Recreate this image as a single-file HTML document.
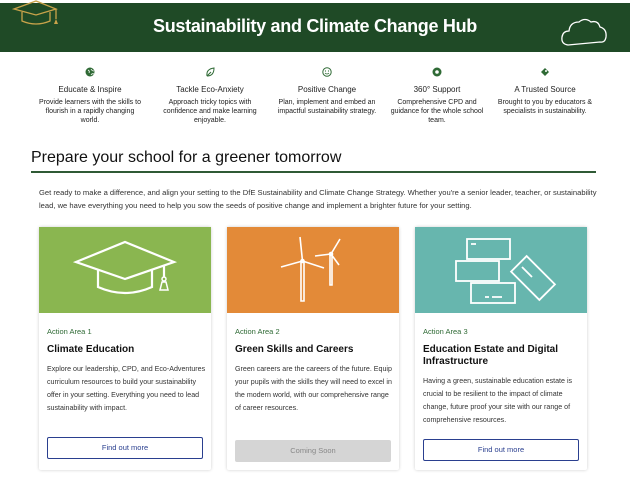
<!DOCTYPE html>
<html><head><style>
*{margin:0;padding:0;box-sizing:border-box}
body{width:630px;height:477px;background:#fff;font-family:"Liberation Sans",sans-serif;position:relative;overflow:hidden;color:#222}
.hdr{position:absolute;top:3px;left:0;width:630px;height:49px;background:#1f4a26}
.hdr h1{position:absolute;left:0;width:630px;top:13px;text-align:center;color:#fff;font-size:18px;font-weight:bold;letter-spacing:-0.3px}
.feat{position:absolute;top:67px;width:104px;text-align:center;font-size:7px;line-height:9px;color:#222}
.feat .t{font-size:8px;margin:8px 0 4px}
.feat svg{display:block;margin:0 auto}
.sec{position:absolute;left:31px;top:149px;font-size:16px;color:#111}
.line{position:absolute;left:31px;top:171px;width:565px;height:1.5px;background:#2f5a35}
.p{position:absolute;left:39px;top:186px;width:560px;font-size:7.6px;line-height:13px;color:#333}
.card{position:absolute;top:227px;width:172px;height:243px;background:#fff;box-shadow:0 0 3px rgba(0,0,0,.2);border-radius:2px}
.img{height:86px;position:relative}
.lab{position:absolute;left:8px;top:100px;font-size:7.5px;color:#2f6a35}
.ti{position:absolute;left:8px;top:117px;font-size:10px;font-weight:bold;color:#111;width:160px;line-height:12px}
.bd{position:absolute;left:8px;width:160px;font-size:7.1px;line-height:13px;color:#333}
.btn{position:absolute;left:8px;width:156px;height:22px;border:1px solid #2a3f8f;border-radius:2px;text-align:center;font-size:7.5px;line-height:20px;color:#2a3f8f}
</style></head><body>
<div class="hdr"><h1>Sustainability and Climate Change Hub</h1>
<svg style="position:absolute;left:12px;top:-4px" width="52" height="26" viewBox="0 0 52 26"><path d="M2 10 L24 2 L44 10 L24 16 Z M10 13 L10 22 Q24 28 38 22 L38 13 M44 10 L44 20" fill="none" stroke="#c9a34a" stroke-width="1.3"/><path d="M44 20 l-2 5 h4z" fill="#c9a34a"/></svg>
<svg style="position:absolute;left:560px;top:12px" width="50" height="34" viewBox="0 0 50 34"><path d="M8 30 Q1 29 2 22 Q3 16 9 16 Q10 7 19 7 Q25 2 31 7 Q38 5 40 12 Q47 14 46 22 Q45 28 40 27 Z" fill="none" stroke="#fff" stroke-width="1.3"/></svg>
</div>
<div class="feat" style="left:38px"><svg width="10" height="10"><circle cx="5" cy="5" r="4.5" fill="#2f6a35"/><path d="M3 3q2 1 1 3M6 2q1 2 3 2M6 8q1-2 3-1" stroke="#fff" fill="none" stroke-width=".8"/></svg><div class="t">Educate &amp; Inspire</div>Provide learners with the skills to flourish in a rapidly changing world.</div>
<div class="feat" style="left:158px"><svg width="10" height="10"><path d="M2 9Q1 2 9 1Q9 9 2 9M2 9L6 5" stroke="#2f6a35" fill="none" stroke-width="1"/></svg><div class="t">Tackle Eco-Anxiety</div>Approach tricky topics with confidence and make learning enjoyable.</div>
<div class="feat" style="left:275px"><svg width="10" height="10"><circle cx="5" cy="5" r="4.2" stroke="#2f6a35" fill="none" stroke-width="1"/><circle cx="3.5" cy="4" r=".6" fill="#2f6a35"/><circle cx="6.5" cy="4" r=".6" fill="#2f6a35"/><path d="M3 6q2 2 4 0" stroke="#2f6a35" fill="none" stroke-width=".8"/></svg><div class="t">Positive Change</div>Plan, implement and embed an impactful sustainability strategy.</div>
<div class="feat" style="left:385px"><svg width="10" height="10"><circle cx="5" cy="5" r="4.5" fill="#2f6a35"/><circle cx="5" cy="5" r="1.8" fill="#fff"/></svg><div class="t">360° Support</div>Comprehensive CPD and guidance for the whole school team.</div>
<div class="feat" style="left:493px"><svg width="10" height="10"><path d="M1 5L5 1L9 5L5 9Z" fill="#2f6a35"/><circle cx="6" cy="4" r="1" fill="#fff"/></svg><div class="t">A Trusted Source</div>Brought to you by educators &amp; specialists in sustainability.</div>
<div class="sec">Prepare your school for a greener tomorrow</div>
<div class="line"></div>
<div class="p">Get ready to make a difference, and align your setting to the DfE Sustainability and Climate Change Strategy. Whether you're a senior leader, teacher, or sustainability lead, we have everything you need to help you sow the seeds of positive change and implement a brighter future for your setting.</div>

<div class="card" style="left:39px"><div class="img" style="background:#8ab650"><svg width="172" height="86" viewBox="0 0 172 86"><path d="M37 35L86 15L135 35L86 52Z M59 43V60Q86 72 113 60V43 M125 38V50" fill="none" stroke="#fff" stroke-width="2.2"/><circle cx="125" cy="52" r="2" fill="none" stroke="#fff" stroke-width="1.5"/><path d="M123 55L121 63H129L127 55Z" fill="none" stroke="#fff" stroke-width="1.5"/></svg></div>
<div class="lab">Action Area 1</div><div class="ti">Climate Education</div>
<div class="bd" style="top:136px">Explore our leadership, CPD, and Eco-Adventures curriculum resources to build your sustainability offer in your setting. Everything you need to lead sustainability with impact.</div>
<div class="btn" style="top:210px">Find out more</div></div>

<div class="card" style="left:227px"><div class="img" style="background:#e38a38"><svg width="172" height="86" viewBox="0 0 172 86"><g fill="none" stroke="#fff" stroke-width="1.6"><path d="M74 34V74H77V34 M75.5 34L73 10M75.5 34L54 40M75.5 34L97 41"/><path d="M103 27V58H105V27 M104 27L113 12M104 27L88 29M104 27L112 38"/><circle cx="75.5" cy="34" r="1.5"/><circle cx="104" cy="27" r="1.5"/></g></svg></div>
<div class="lab">Action Area 2</div><div class="ti">Green Skills and Careers</div>
<div class="bd" style="top:136px">Green careers are the careers of the future. Equip your pupils with the skills they will need to excel in the modern world, with our comprehensive range of career resources.</div>
<div class="btn" style="top:213px;background:#d5d5d5;border-color:#d5d5d5;color:#888">Coming Soon</div></div>

<div class="card" style="left:415px"><div class="img" style="background:#67b6ae"><svg width="172" height="86" viewBox="0 0 172 86"><g fill="none" stroke="#fff" stroke-width="1.8"><rect x="52" y="12" width="43" height="20"/><rect x="41" y="34" width="43" height="20"/><rect x="56" y="56" width="44" height="20"/><rect x="98" y="40" width="40" height="22" transform="rotate(45 118 51)"/><path d="M56 17h5M77 70h10M70 70h4M107 40l10 10"/></g></svg></div>
<div class="lab">Action Area 3</div><div class="ti">Education Estate and Digital Infrastructure</div>
<div class="bd" style="top:148px">Having a green, sustainable education estate is crucial to be resilient to the impact of climate change, future proof your site with our range of comprehensive resources.</div>
<div class="btn" style="top:212px">Find out more</div></div>
</body></html>
